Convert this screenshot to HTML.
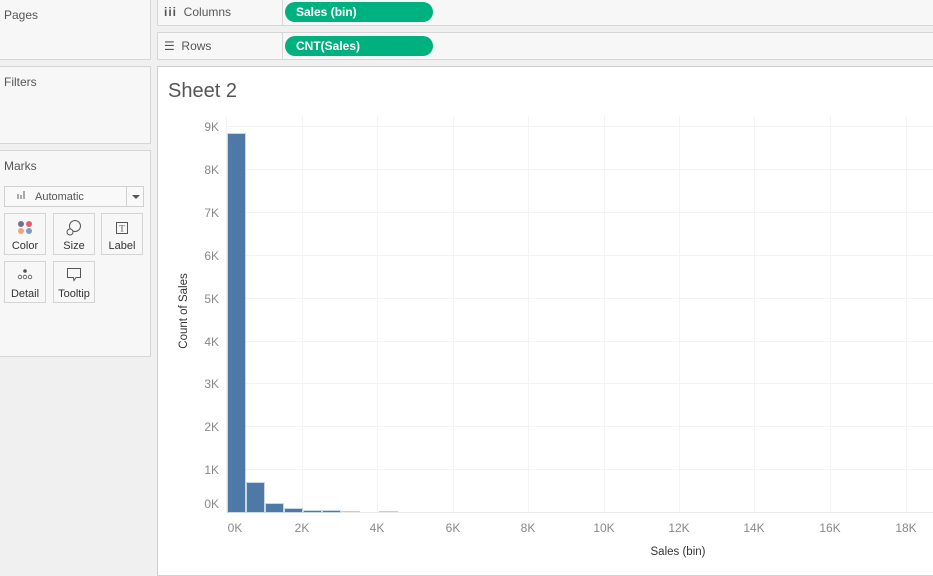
<!DOCTYPE html>
<html><head><meta charset="utf-8"><style>
*{margin:0;padding:0;box-sizing:border-box}
body{width:933px;height:569px;overflow:hidden;background:#f0f0f0;font-family:"Liberation Sans",sans-serif;position:relative}
.p{position:absolute;background:#f7f7f7;border:1px solid #d6d6d6}
.t{position:absolute;font-size:12px;color:#555}
.btn{position:absolute;width:42px;height:42px;border:1px solid #d4d4d4;background:#f7f7f7;font-size:11px;color:#333;text-align:center}
.btn span{position:absolute;bottom:2px;left:0;right:0}
.pill{position:absolute;left:285px;width:148px;height:20px;border-radius:10px;background:#00b180;color:#fff;font-size:12px;font-weight:bold;padding:3px 0 0 11px}
</style></head><body>
<div class="p" style="left:-1px;top:-1px;width:152px;height:61px"></div>
<div class="t" style="left:4px;top:8px">Pages</div>
<div class="p" style="left:-1px;top:66px;width:152px;height:78px"></div>
<div class="t" style="left:4px;top:75px">Filters</div>
<div class="p" style="left:-1px;top:150px;width:152px;height:207px"></div>
<div class="t" style="left:4px;top:159px">Marks</div>
<div style="position:absolute;left:4px;top:186px;width:140px;height:21px;border:1px solid #d0d0d0;background:#f9f9f9;font-size:11px;color:#555">
<span style="position:absolute;left:12px;top:7px;width:2px;height:5px;background:#aaa"></span><span style="position:absolute;left:15px;top:8px;width:2px;height:4px;background:#aaa"></span><span style="position:absolute;left:18px;top:4px;width:2px;height:8px;background:#aaa"></span>
<span style="position:absolute;left:30px;top:4px">Automatic</span>
<span style="position:absolute;left:121px;top:0;width:1px;height:19px;background:#d0d0d0"></span>
<span style="position:absolute;left:127px;top:8px;border-left:4px solid transparent;border-right:4px solid transparent;border-top:4px solid #555"></span></div>
<div class="btn" style="left:4px;top:213px"><svg width="16" height="16" style="margin-top:6px"><circle cx="4" cy="4" r="3" fill="#7a6b94"/><circle cx="12" cy="4" r="3" fill="#e15e6e"/><circle cx="4" cy="11" r="3" fill="#eba67a"/><circle cx="12" cy="11" r="3" fill="#7a9cc6"/></svg><span>Color</span></div>
<div class="btn" style="left:53px;top:213px"><svg width="18" height="18" style="margin-top:5px"><circle cx="10" cy="7" r="5.5" fill="none" stroke="#555"/><circle cx="5" cy="13" r="3" fill="#f7f7f7" stroke="#555"/></svg><span>Size</span></div>
<div class="btn" style="left:101px;top:213px"><svg width="14" height="14" style="margin-top:7px"><rect x="1.5" y="1.5" width="11" height="11" fill="none" stroke="#555"/><text x="7" y="10.5" font-size="9" text-anchor="middle" fill="#555" font-family="Liberation Serif">T</text></svg><span>Label</span></div>
<div class="btn" style="left:4px;top:261px"><svg width="16" height="12" style="margin-top:6px"><circle cx="8" cy="3" r="1.8" fill="#555"/><circle cx="3" cy="9" r="1.8" fill="none" stroke="#555" stroke-width=".8"/><circle cx="8" cy="9" r="1.8" fill="none" stroke="#555" stroke-width=".8"/><circle cx="13" cy="9" r="1.8" fill="none" stroke="#555" stroke-width=".8"/></svg><span>Detail</span></div>
<div class="btn" style="left:53px;top:261px"><svg width="16" height="16" style="margin-top:5px"><path d="M1.5 1.5H14.5V10.5H10L8 13.5L7.5 10.5H1.5Z" fill="none" stroke="#555"/></svg><span>Tooltip</span></div>

<div class="p" style="left:157px;top:-1px;width:780px;height:27px"></div>
<div style="position:absolute;left:282px;top:0;width:1px;height:25px;background:#d6d6d6"></div>
<div class="t" style="left:164px;top:5px;color:#555"><b style="letter-spacing:1px">iii</b>&nbsp; Columns</div>
<div class="pill" style="top:2px">Sales (bin)</div>
<div class="p" style="left:157px;top:32px;width:780px;height:28px"></div>
<div style="position:absolute;left:282px;top:33px;width:1px;height:26px;background:#d6d6d6"></div>
<div class="t" style="left:164px;top:39px">☰&nbsp; Rows</div>
<div class="pill" style="top:36px">CNT(Sales)</div>

<div style="position:absolute;left:157px;top:66px;width:780px;height:510px;background:#fff;border:1px solid #d0d0d0"></div>
<div style="position:absolute;left:168px;top:80px;font-size:20px;color:#555">Sheet 2</div>
<svg width="933" height="569" style="position:absolute;left:0;top:0" font-family="Liberation Sans" font-size="12" fill="#888">
<g stroke="#f3f3f3" stroke-width="1">
<line x1="227" y1="126.5" x2="933" y2="126.5"/><line x1="227" y1="169.5" x2="933" y2="169.5"/><line x1="227" y1="212.5" x2="933" y2="212.5"/><line x1="227" y1="255.5" x2="933" y2="255.5"/><line x1="227" y1="298.5" x2="933" y2="298.5"/><line x1="227" y1="341.5" x2="933" y2="341.5"/><line x1="227" y1="383.5" x2="933" y2="383.5"/><line x1="227" y1="426.5" x2="933" y2="426.5"/><line x1="227" y1="469.5" x2="933" y2="469.5"/>
<line x1="302.5" y1="116" x2="302.5" y2="512"/><line x1="377.5" y1="116" x2="377.5" y2="512"/><line x1="453.5" y1="116" x2="453.5" y2="512"/><line x1="528.5" y1="116" x2="528.5" y2="512"/><line x1="604.5" y1="116" x2="604.5" y2="512"/><line x1="679.5" y1="116" x2="679.5" y2="512"/><line x1="754.5" y1="116" x2="754.5" y2="512"/><line x1="830.5" y1="116" x2="830.5" y2="512"/><line x1="906.5" y1="116" x2="906.5" y2="512"/>
<line x1="227" y1="512.5" x2="933" y2="512.5" stroke="#ebebeb"/><line x1="226.5" y1="116" x2="226.5" y2="512"/>
</g>
<g fill="#4e79a7" stroke="#c9d6e4" stroke-width="1">
<rect x="227.5" y="133.5" width="18" height="379"/><rect x="246.5" y="482.5" width="18" height="30"/><rect x="265.5" y="503.5" width="18" height="9"/><rect x="284.5" y="508.5" width="18" height="4"/><rect x="303.5" y="510.5" width="18" height="2"/><rect x="322.5" y="510.5" width="18" height="2"/>
</g>
<rect x="341" y="511" width="19" height="1" fill="#ccc"/><rect x="379" y="511" width="19" height="1" fill="#ccc"/>
<g text-anchor="end"><text x="219" y="131">9K</text><text x="219" y="174">8K</text><text x="219" y="217">7K</text><text x="219" y="260">6K</text><text x="219" y="303">5K</text><text x="219" y="346">4K</text><text x="219" y="388">3K</text><text x="219" y="431">2K</text><text x="219" y="474">1K</text><text x="219" y="508">0K</text></g>
<g text-anchor="middle"><text x="235" y="532">0K</text><text x="302" y="532">2K</text><text x="377" y="532">4K</text><text x="453" y="532">6K</text><text x="528" y="532">8K</text><text x="604" y="532">10K</text><text x="679" y="532">12K</text><text x="754" y="532">14K</text><text x="830" y="532">16K</text><text x="906" y="532">18K</text></g>
<text x="678" y="555" text-anchor="middle" fill="#333" font-size="11.5">Sales (bin)</text>
<text transform="translate(187,311) rotate(-90)" text-anchor="middle" fill="#333" font-size="11.5">Count of Sales</text>
</svg>
</body></html>
